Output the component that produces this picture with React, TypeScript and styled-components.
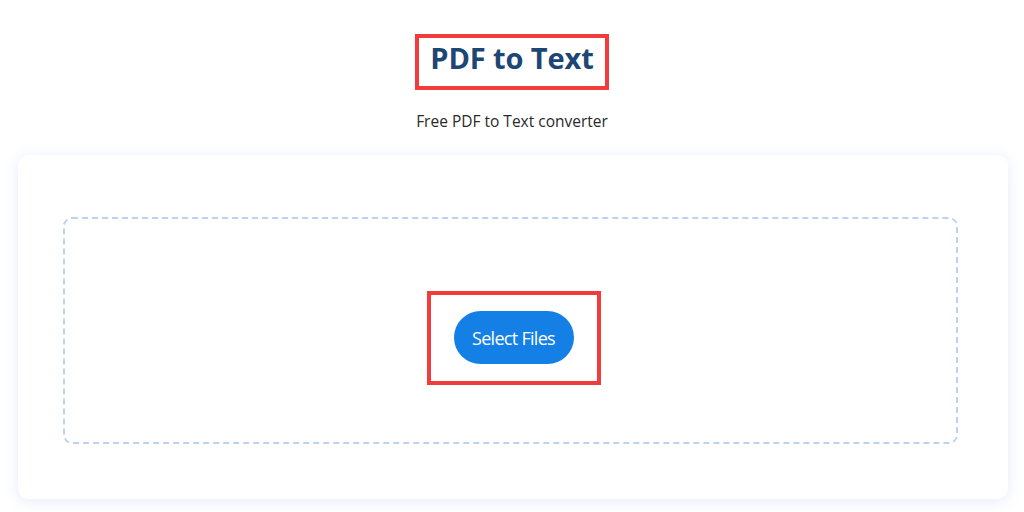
import React from "react";
import styled, { createGlobalStyle } from "styled-components";

const GlobalStyle = createGlobalStyle`
  html, body {
    margin: 0;
    padding: 0;
    background: #ffffff;
    font-family: "Open Sans", "Noto Sans", sans-serif;
  }
  * {
    box-sizing: border-box;
  }
`;

const Page = styled.div`
  width: 1024px;
  height: 512px;
  overflow: hidden;
  padding-top: 34px;
  display: flex;
  flex-direction: column;
  align-items: center;
`;

const Highlight = styled.div<{ $w: number; $h: number }>`
  width: ${(p) => p.$w}px;
  height: ${(p) => p.$h}px;
  border: 4px solid #f23b3b;
  display: flex;
  align-items: center;
  justify-content: center;
`;

const Title = styled.h1`
  margin: 0;
  font-size: 29px;
  font-weight: 700;
  color: #1c4674;
  letter-spacing: -0.1px;
  line-height: 1;
  padding-bottom: 9px;
`;

const Subtitle = styled.p`
  margin: 19px 0 0;
  font-size: 15.5px;
  color: #2a2a2a;
  line-height: 24px;
`;

const Card = styled.section`
  margin-top: 22px;
  width: 990px;
  align-self: flex-start;
  margin-left: 18px;
  height: 344px;
  background: #ffffff;
  border-radius: 11px;
  box-shadow: 0 2px 14px rgba(90, 130, 220, 0.16);
  padding: 62px 50px 55px 45px;
`;

const DropZone = styled.div`
  height: 100%;
  border: 2px dashed #bcd2f2;
  border-radius: 9px;
  display: flex;
  align-items: center;
  justify-content: center;
  padding-top: 14px;
  padding-left: 6px;
`;

const SelectButton = styled.button`
  width: 120px;
  height: 53px;
  border: none;
  border-radius: 27px;
  background: #1480e6;
  color: #ffffff;
  font-family: "Open Sans", "Noto Sans", sans-serif;
  font-size: 18px;
  font-weight: 500;
  letter-spacing: -0.7px;
  cursor: pointer;
`;

export default function App() {
  return (
    <>
      <GlobalStyle />
      <Page>
        <Highlight $w={194} $h={56}>
          <Title>PDF to Text</Title>
        </Highlight>
        <Subtitle>Free PDF to Text converter</Subtitle>
        <Card>
          <DropZone>
            <Highlight $w={174} $h={94}>
              <SelectButton>Select Files</SelectButton>
            </Highlight>
          </DropZone>
        </Card>
      </Page>
    </>
  );
}
